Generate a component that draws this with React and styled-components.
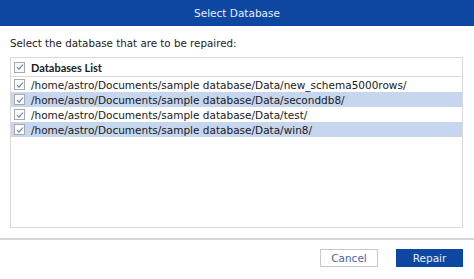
import React, { useState } from "react";
import styled, { createGlobalStyle } from "styled-components";

const GlobalStyle = createGlobalStyle`
  html, body {
    margin: 0;
    padding: 0;
    background: #ffffff;
  }
  body {
    font-family: "DejaVu Sans", "Noto Sans", sans-serif;
  }
`;

const Dialog = styled.div`
  width: 474px;
  height: 279px;
  display: flex;
  flex-direction: column;
  background: #ffffff;
`;

const TitleBar = styled.div`
  height: 26px;
  background: #0d47a1;
  color: #e8eef8;
  font-size: 10.5px;
  display: flex;
  align-items: center;
  justify-content: center;
`;

const Body = styled.div`
  display: flex;
  flex-direction: column;
  padding: 10px 11px 0 10px;
`;

const Prompt = styled.div`
  font-size: 10.3px;
  color: #222;
  height: 21px;
  line-height: 14px;
`;

const ListBox = styled.div`
  height: 169px;
  border: 1px solid #d9d9d9;
  display: flex;
  flex-direction: column;
`;

const Row = styled.div`
  height: 15px;
  display: flex;
  align-items: center;
  padding-left: 3px;
  gap: 6px;
  font-size: 10.5px;
  color: #1a1a1a;
  background: ${(p) => (p.$alt ? "#c6d6ef" : "#ffffff")};
  white-space: nowrap;
`;

const HeadRow = styled(Row)`
  height: 18px;
  font-family: Lato, "DejaVu Sans", sans-serif;
  font-size: 11px;
  font-weight: bold;
  color: #202020;
  border-bottom: 1px solid #d9d9d9;
`;

const Box = styled.span`
  width: 9px;
  height: 9px;
  border: 1px solid #a8a8a8;
  background: #fbfbfb;
  display: flex;
  align-items: center;
  justify-content: center;
  flex-shrink: 0;
`;

const Separator = styled.div`
  margin-top: 10px;
  height: 2px;
  background: #d6d6d6;
`;

const Footer = styled.div`
  display: flex;
  justify-content: flex-end;
  gap: 18px;
  padding: 9px 11px 0 0;
`;

const Button = styled.button`
  height: 18px;
  width: ${(p) => p.$w}px;
  border: 1px solid ${(p) => (p.$primary ? "#0d47a1" : "#c8c8c8")};
  background: ${(p) => (p.$primary ? "#0d47a1" : "#ffffff")};
  color: ${(p) => (p.$primary ? "#e8eef8" : "#47679b")};
  font-family: "DejaVu Sans", "Noto Sans", sans-serif;
  font-size: 10.5px;
  padding: 0;
  cursor: pointer;
`;

const Check = () => (
  <Box>
    <svg width="8" height="8" viewBox="0 0 8 8">
      <path d="M1 4.2 L3 6.2 L7 1.5" fill="none" stroke="#5f82b0" strokeWidth="1.1" />
    </svg>
  </Box>
);

const paths = [
  "/home/astro/Documents/sample database/Data/new_schema5000rows/",
  "/home/astro/Documents/sample database/Data/seconddb8/",
  "/home/astro/Documents/sample database/Data/test/",
  "/home/astro/Documents/sample database/Data/win8/",
];

export default function App() {
  const [items] = useState(paths);
  return (
    <Dialog>
      <GlobalStyle />
      <TitleBar>Select Database</TitleBar>
      <Body>
        <Prompt>Select the database that are to be repaired:</Prompt>
        <ListBox>
          <HeadRow>
            <Check />
            Databases List
          </HeadRow>
          {items.map((p, i) => (
            <Row key={p} $alt={i % 2 === 1}>
              <Check />
              {p}
            </Row>
          ))}
        </ListBox>
      </Body>
      <Separator />
      <Footer>
        <Button $w={58}>Cancel</Button>
        <Button $w={67} $primary>
          Repair
        </Button>
      </Footer>
    </Dialog>
  );
}
